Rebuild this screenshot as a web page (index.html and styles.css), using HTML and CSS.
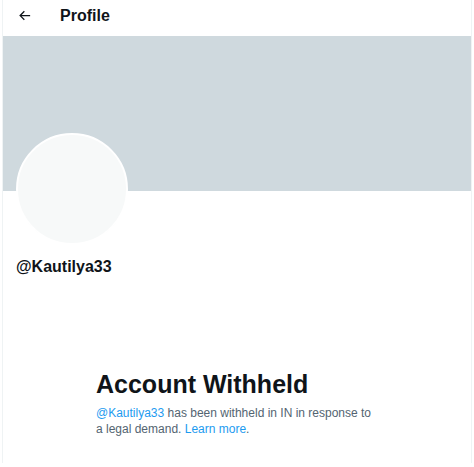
FILE: index.html
```html
<!DOCTYPE html>
<html lang="en">
<head>
    <meta charset="UTF-8">
    <meta name="viewport" content="width=device-width, initial-scale=1.0">
    <title>Profile</title>
    <link rel="stylesheet" href="styles.css">
</head>
<body>
    <div class="column">
        <div class="top-bar">
            <button class="back-btn" aria-label="Back">
                <svg viewBox="0 0 24 24" width="15" height="15"><path d="M7.414 13l5.043 5.04-1.414 1.42L3.586 12l7.457-7.46 1.414 1.42L7.414 11H21v2H7.414z"></path></svg>
            </button>
            <h2 class="page-title">Profile</h2>
        </div>

        <div class="banner"></div>

        <div class="profile-info">
            <div class="avatar"></div>
            <div class="handle">@Kautilya33</div>
        </div>

        <div class="withheld">
            <h1>Account Withheld</h1>
            <p><a href="#">@Kautilya33</a> has been withheld in IN in response to a legal demand. <a href="#">Learn more</a>.</p>
        </div>
    </div>
</body>
</html>
```

FILE: styles.css
```css
* {
    box-sizing: border-box;
}
body {
    margin: 0;
    background-color: #ffffff;
    font-family: "Liberation Sans", Arial, sans-serif;
    color: #0f1419;
}
.column {
    margin: 0 2px;
    height: 463px;
    border-left: 1px solid #eff3f4;
    border-right: 1px solid #eff3f4;
}
.top-bar {
    display: flex;
    align-items: center;
    height: 36px;
    padding: 0 0 5px 14px;
}
.back-btn {
    display: flex;
    align-items: center;
    justify-content: center;
    width: 15px;
    height: 15px;
    padding: 0;
    border: none;
    background: none;
    cursor: pointer;
}
.back-btn svg {
    fill: #0f1419;
}
.page-title {
    margin: 0 0 0 28px;
    font-size: 16px;
    font-weight: bold;
    line-height: 20px;
}
.banner {
    height: 155px;
    background-color: #cfd9de;
}
.profile-info {
    padding: 0 13px;
}
.avatar {
    width: 112px;
    height: 112px;
    margin-top: -58px;
    border: 2px solid #ffffff;
    border-radius: 50%;
    background-color: #f7f9f9;
}
.handle {
    margin-top: 12px;
    font-size: 16px;
    font-weight: bold;
    line-height: 20px;
}
.withheld {
    width: 282px;
    margin: 92px 0 0 93px;
}
.withheld h1 {
    margin: 0;
    font-size: 25px;
    font-weight: bold;
    line-height: 30px;
}
.withheld p {
    margin: 6px 0 0;
    font-size: 12px;
    line-height: 16px;
    color: #536471;
}
.withheld a {
    color: #1d9bf0;
    text-decoration: none;
}
```
